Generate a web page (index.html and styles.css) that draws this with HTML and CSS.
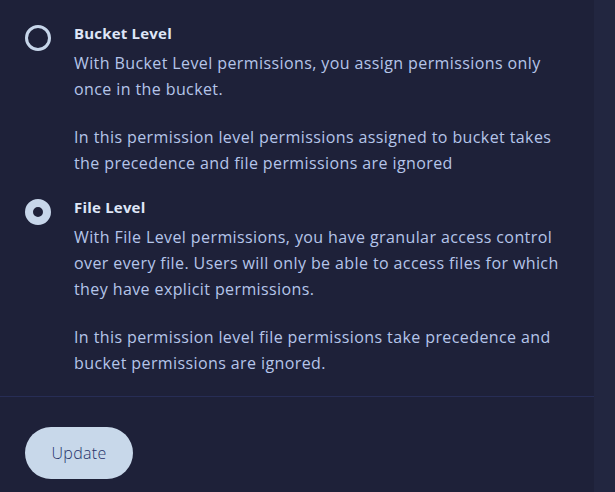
FILE: index.html
```html
<!DOCTYPE html>
<html lang="en">
<head>
<meta charset="utf-8">
<title>Permissions</title>
<link rel="stylesheet" href="styles.css">
</head>
<body>
<div class="page">
  <div class="main">
    <div class="options">
      <label class="option">
        <span class="radio"></span>
        <span class="option-text">
          <span class="option-title">Bucket Level</span>
          <span class="option-desc">With Bucket Level permissions, you assign permissions only once in the bucket.</span>
          <span class="option-desc extra">In this permission level permissions assigned to bucket takes the precedence and file permissions are ignored</span>
        </span>
      </label>
      <label class="option">
        <span class="radio checked"></span>
        <span class="option-text">
          <span class="option-title">File Level</span>
          <span class="option-desc">With File Level permissions, you have granular access control over every file. Users will only be able to access files for which they have explicit permissions.</span>
          <span class="option-desc extra">In this permission level file permissions take precedence and bucket permissions are ignored.</span>
        </span>
      </label>
    </div>
    <div class="footer">
      <button class="btn-update" type="button">Update</button>
    </div>
  </div>
  <div class="track"></div>
</div>
</body>
</html>
```
FILE: styles.css
```css
html, body {
  margin: 0;
  padding: 0;
  background: #1e2139;
  height: 100%;
  overflow: hidden;
}
.page {
  display: flex;
  height: 492px;
  font-family: "Open Sans", "DejaVu Sans", sans-serif;
}
.main {
  width: 594px;
  display: flex;
  flex-direction: column;
}
.track {
  flex: 1;
  background: #222640;
}
.options {
  display: flex;
  flex-direction: column;
  gap: 19px;
  padding: 21px 24px 20px 25px;
  border-bottom: 1px solid #272d55;
}
.option {
  display: flex;
  gap: 23px;
  align-items: flex-start;
}
.radio {
  flex: none;
  box-sizing: border-box;
  width: 26px;
  height: 26px;
  margin-top: 4px;
  border-radius: 50%;
  border: 3px solid #c7d6ea;
}
.radio.checked {
  border-width: 8px;
}
.option-text {
  display: flex;
  flex-direction: column;
}
.option-title {
  font-size: 15px;
  font-weight: 700;
  letter-spacing: 0.2px;
  line-height: 24px;
  color: #dfe6f7;
  margin-bottom: 5px;
}
.option-desc {
  font-size: 16px;
  letter-spacing: 0.4px;
  line-height: 26px;
  color: #b5c5e9;
}
.option-desc.extra {
  margin-top: 22px;
}
.footer {
  padding: 30px 25px;
}
.btn-update {
  width: 108px;
  height: 52px;
  border: none;
  border-radius: 26px;
  background: #c8d8ea;
  color: #27336a;
  font-family: inherit;
  font-size: 16px;
  font-weight: 300;
  letter-spacing: 0.3px;
  padding: 0;
}
```
